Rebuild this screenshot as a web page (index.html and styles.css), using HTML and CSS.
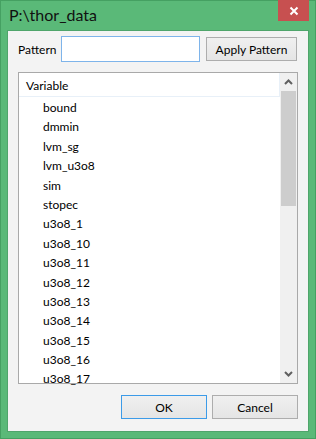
FILE: index.html
```html
<!DOCTYPE html>
<html>
<head>
<meta charset="utf-8">
<link rel="stylesheet" href="styles.css">
</head>
<body>
<div class="window">
  <div class="titlebar">
    <span class="title">P:\thor_data</span>
    <div class="close">
      <svg width="10" height="10" viewBox="0 0 10 10"><path d="M1.5 1.5 L8.5 8.5 M8.5 1.5 L1.5 8.5" stroke="#fff" stroke-width="2" fill="none"/></svg>
    </div>
  </div>
  <div class="client">
    <div class="pattern-row">
      <label class="label">Pattern</label>
      <div class="input"></div>
      <div class="btn apply">Apply Pattern</div>
    </div>
    <div class="listbox">
      <div class="list-main">
        <div class="header">Variable</div>
        <div class="items">
          <div class="item">bound</div>
          <div class="item">dmmin</div>
          <div class="item">lvm_sg</div>
          <div class="item">lvm_u3o8</div>
          <div class="item">sim</div>
          <div class="item">stopec</div>
          <div class="item">u3o8_1</div>
          <div class="item">u3o8_10</div>
          <div class="item">u3o8_11</div>
          <div class="item">u3o8_12</div>
          <div class="item">u3o8_13</div>
          <div class="item">u3o8_14</div>
          <div class="item">u3o8_15</div>
          <div class="item">u3o8_16</div>
          <div class="item">u3o8_17</div>
        </div>
      </div>
      <div class="scrollbar">
        <div class="arrow">
          <svg width="9" height="6" viewBox="0 0 9 6"><path d="M1 5 L4.5 1.5 L8 5" stroke="#606060" stroke-width="2" fill="none"/></svg>
        </div>
        <div class="track">
          <div class="thumb"></div>
        </div>
        <div class="arrow">
          <svg width="9" height="6" viewBox="0 0 9 6"><path d="M1 1 L4.5 4.5 L8 1" stroke="#606060" stroke-width="2" fill="none"/></svg>
        </div>
      </div>
    </div>
    <div class="footer">
      <div class="btn ok">OK</div>
      <div class="btn cancel">Cancel</div>
    </div>
  </div>
</div>
</body>
</html>
```

FILE: styles.css
```css
* { box-sizing: border-box; }
html, body { margin: 0; padding: 0; }
body {
  width: 316px;
  height: 439px;
  overflow: hidden;
  font-family: "Lato", "Noto Sans", sans-serif;
  font-size: 12px;
  color: #000;
}
.window {
  width: 316px;
  height: 439px;
  background: #5ab978;
  border: 1px solid #45a062;
  display: flex;
  flex-direction: column;
}
.titlebar {
  height: 29px;
  display: flex;
  align-items: flex-start;
  padding: 0 6px 0 8px;
}
.title {
  font-size: 16px;
  line-height: 27px;
  color: #111;
}
.close {
  margin-left: auto;
  margin-top: -1px;
  width: 31px;
  height: 21px;
  background: #c75050;
  display: flex;
  align-items: center;
  justify-content: center;
}
.client {
  flex: 1;
  margin: 0 6px 6px 6px;
  background: #f3f3f3;
  border: 1px solid #4fa56b;
  padding: 5px 10px 0 10px;
  display: flex;
  flex-direction: column;
}
.pattern-row {
  display: flex;
  align-items: center;
  height: 26px;
}
.label {
  width: 43px;
  padding-top: 1px;
}
.input {
  width: 139px;
  height: 26px;
  background: #fff;
  border: 1px solid #7eb4ea;
}
.btn {
  height: 24px;
  background: linear-gradient(#f0f0f0, #e5e5e5);
  border: 1px solid #adadad;
  display: flex;
  align-items: center;
  justify-content: center;
}
.apply {
  margin-left: 6px;
  width: 91px;
}
.listbox {
  margin-top: 10px;
  height: 312px;
  background: #fff;
  border: 1px solid #a9a9a9;
  display: flex;
}
.list-main {
  flex: 1;
  display: flex;
  flex-direction: column;
}
.header {
  height: 24px;
  line-height: 25px;
  padding-left: 7px;
  border-bottom: 1px solid #e8f0f8;
  border-right: 1px solid #e8f0f8;
}
.items {
  padding-top: 1px;
}
.item {
  height: 19.4px;
  line-height: 19.4px;
  padding-left: 24px;
}
.scrollbar {
  width: 17px;
  background: #f0f0f0;
  display: flex;
  flex-direction: column;
}
.arrow {
  height: 18px;
  display: flex;
  align-items: center;
  justify-content: center;
}
.track {
  flex: 1;
  padding: 0 1px;
}
.thumb {
  height: 115px;
  background: #cdcdcd;
}
.footer {
  display: flex;
  justify-content: flex-end;
  gap: 5px;
  margin-top: 11px;
}
.ok {
  width: 86px;
  border-color: #3c9be8;
}
.cancel {
  width: 86px;
}
```
